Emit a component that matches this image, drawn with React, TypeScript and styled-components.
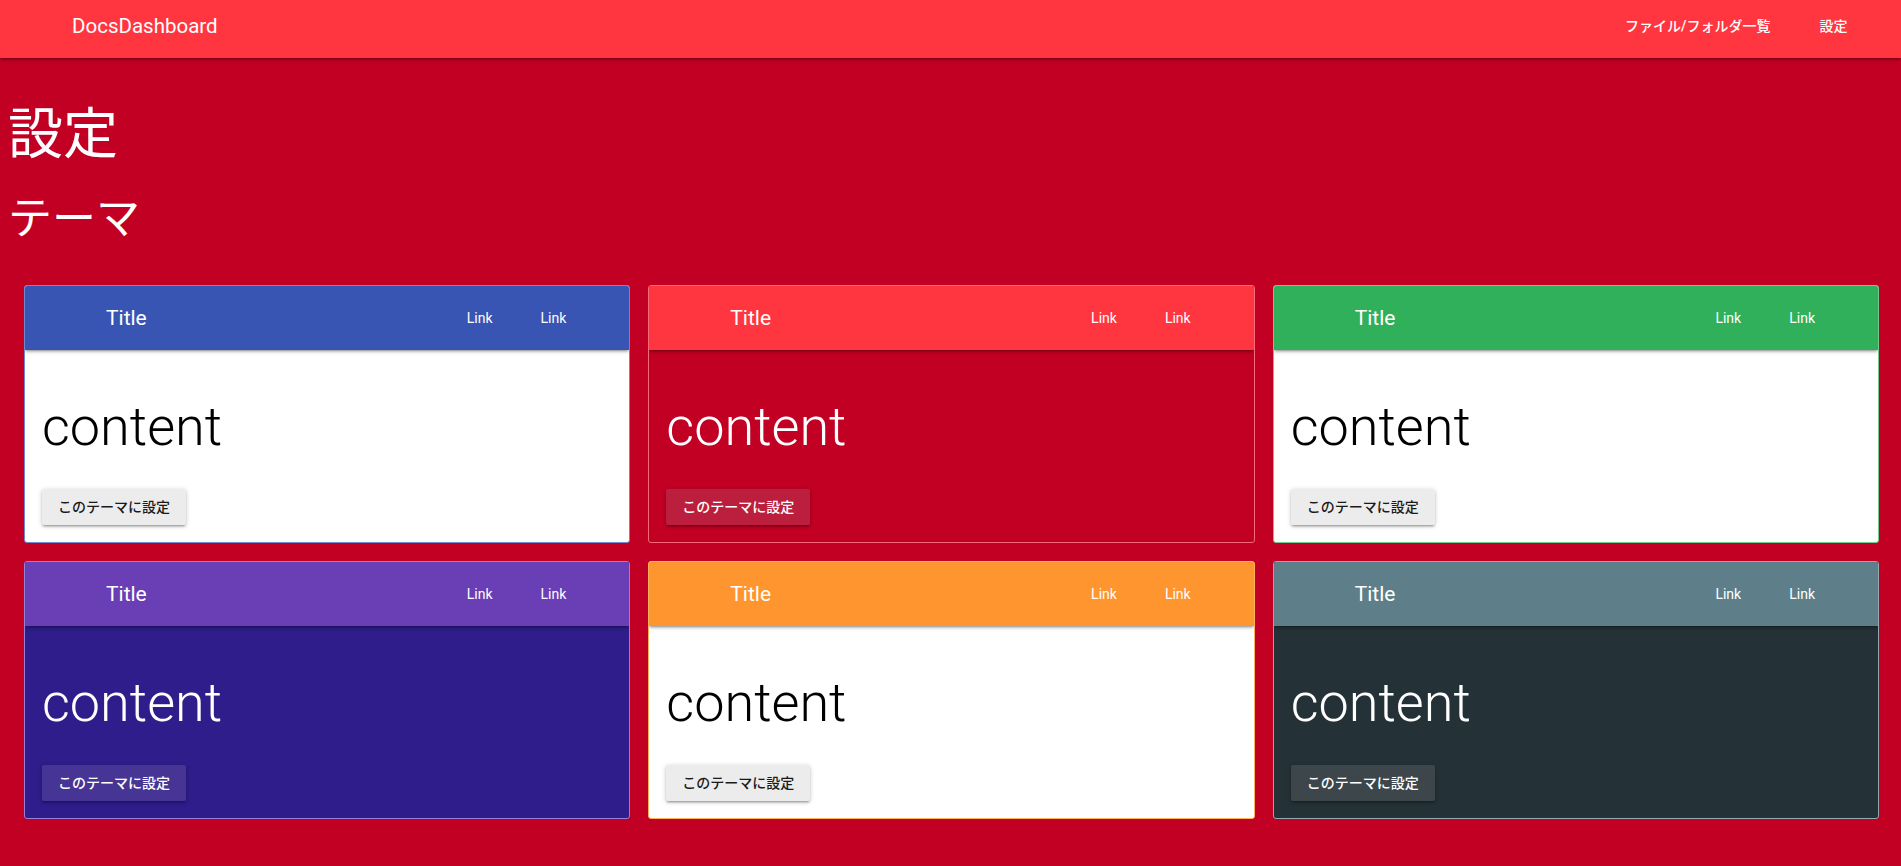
import React from "react";
import styled, { createGlobalStyle } from "styled-components";

type Theme = {
  nav: string;
  body: string;
  text: string;
  button: string;
  buttonText: string;
  border: string;
};

const themes: Theme[] = [
  { nav: "#3955b3", body: "#ffffff", text: "#000000", button: "#ececec", buttonText: "#1a1a1a", border: "#7088cc" },
  { nav: "#ff3640", body: "#c20024", text: "#ffffff", button: "#bc1f3d", buttonText: "#ffffff", border: "#f56a76" },
  { nav: "#31b05b", body: "#ffffff", text: "#000000", button: "#ececec", buttonText: "#1a1a1a", border: "#72cb8b" },
  { nav: "#6a3eb4", body: "#2e1d8b", text: "#ffffff", button: "#463595", buttonText: "#ffffff", border: "#9a7fd8" },
  { nav: "#ff952e", body: "#ffffff", text: "#000000", button: "#ececec", buttonText: "#1a1a1a", border: "#ffb25a" },
  { nav: "#5e7f8a", body: "#243238", text: "#ffffff", button: "#3c464b", buttonText: "#ffffff", border: "#94aab3" },
];

const GlobalStyle = createGlobalStyle`
  html, body {
    margin: 0;
    padding: 0;
    min-height: 100%;
    background: #c20024;
  }
  body {
    font-family: Roboto, "Noto Sans CJK JP", sans-serif;
    color: #ffffff;
  }
  * {
    box-sizing: border-box;
  }
`;

const Page = styled.div`
  min-height: 866px;
  background: #c20024;
`;

const Header = styled.header`
  height: 58px;
  background: #ff3640;
  display: flex;
  align-items: flex-start;
  justify-content: space-between;
  padding: 0 29px 0 72px;
  box-shadow: 0 2px 2px 0 rgba(0, 0, 0, 0.14), 0 3px 1px -2px rgba(0, 0, 0, 0.12),
    0 1px 5px 0 rgba(0, 0, 0, 0.2);
  position: relative;
  z-index: 1;
`;

const Brand = styled.a`
  font-size: 20.5px;
  line-height: 52px;
  color: #ffffff;
  text-decoration: none;
`;

const HeaderLinks = styled.ul`
  display: flex;
  list-style: none;
  margin: 0;
  padding: 0;
`;

const HeaderLink = styled.a`
  display: block;
  padding: 0 24.5px;
  font-size: 14px;
  font-weight: 500;
  line-height: 52px;
  color: #ffffff;
  text-decoration: none;
`;

const Main = styled.main`
  padding: 0 22px 30px 8px;
`;

const PageTitle = styled.h1`
  margin: 46px 0 0;
  font-size: 55px;
  font-weight: 400;
  line-height: 1.1;
`;

const SectionTitle = styled.h2`
  margin: 30px 0 0;
  font-size: 44px;
  font-weight: 400;
  line-height: 1.1;
`;

const Grid = styled.div`
  display: grid;
  grid-template-columns: repeat(3, 1fr);
  gap: 18px;
  margin-top: 42px;
  padding-left: 16px;
`;

const Card = styled.div<{ $theme: Theme }>`
  border: 1px solid ${(p) => p.$theme.border};
  border-radius: 3px;
  background: ${(p) => p.$theme.body};
  overflow: hidden;
  height: 258px;
  display: flex;
  flex-direction: column;
`;

const CardNav = styled.nav<{ $theme: Theme }>`
  height: 64px;
  flex: none;
  background: ${(p) => p.$theme.nav};
  display: flex;
  justify-content: space-between;
  padding: 0 39px 0 81px;
  box-shadow: 0 2px 2px 0 rgba(0, 0, 0, 0.14), 0 3px 1px -2px rgba(0, 0, 0, 0.12),
    0 1px 5px 0 rgba(0, 0, 0, 0.2);
  position: relative;
  z-index: 1;
`;

const CardTitle = styled.span`
  font-size: 21px;
  line-height: 64px;
  color: #ffffff;
`;

const CardLinks = styled.div`
  display: flex;
`;

const CardLink = styled.a`
  padding: 0 24px;
  font-size: 14px;
  line-height: 64px;
  color: #ffffff;
  text-decoration: none;
`;

const CardBody = styled.div<{ $theme: Theme }>`
  flex: 1;
  padding: 47px 17px 0;
  color: ${(p) => p.$theme.text};
`;

const Content = styled.h3`
  margin: 0 0 33px;
  font-size: 54px;
  font-weight: 300;
  line-height: 1.1;
`;

const ThemeButton = styled.button<{ $theme: Theme }>`
  height: 36px;
  padding: 0 16px;
  border: none;
  border-radius: 2px;
  background: ${(p) => p.$theme.button};
  color: ${(p) => p.$theme.buttonText};
  font-family: Roboto, "Noto Sans CJK JP", sans-serif;
  font-size: 14px;
  font-weight: 500;
  line-height: 36px;
  cursor: pointer;
  box-shadow: 0 2px 2px 0 rgba(0, 0, 0, 0.14), 0 3px 1px -2px rgba(0, 0, 0, 0.12),
    0 1px 5px 0 rgba(0, 0, 0, 0.2);
`;

function ThemeCard({ theme }: { theme: Theme }) {
  return (
    <Card $theme={theme}>
      <CardNav $theme={theme}>
        <CardTitle>Title</CardTitle>
        <CardLinks>
          <CardLink href="#">Link</CardLink>
          <CardLink href="#">Link</CardLink>
        </CardLinks>
      </CardNav>
      <CardBody $theme={theme}>
        <Content>content</Content>
        <ThemeButton $theme={theme}>このテーマに設定</ThemeButton>
      </CardBody>
    </Card>
  );
}

export default function App() {
  return (
    <Page>
      <GlobalStyle />
      <Header>
        <Brand href="#">DocsDashboard</Brand>
        <HeaderLinks>
          <li>
            <HeaderLink href="#">ファイル/フォルダ一覧</HeaderLink>
          </li>
          <li>
            <HeaderLink href="#">設定</HeaderLink>
          </li>
        </HeaderLinks>
      </Header>
      <Main>
        <PageTitle>設定</PageTitle>
        <SectionTitle>テーマ</SectionTitle>
        <Grid>
          {themes.map((t, i) => (
            <ThemeCard key={i} theme={t} />
          ))}
        </Grid>
      </Main>
    </Page>
  );
}
